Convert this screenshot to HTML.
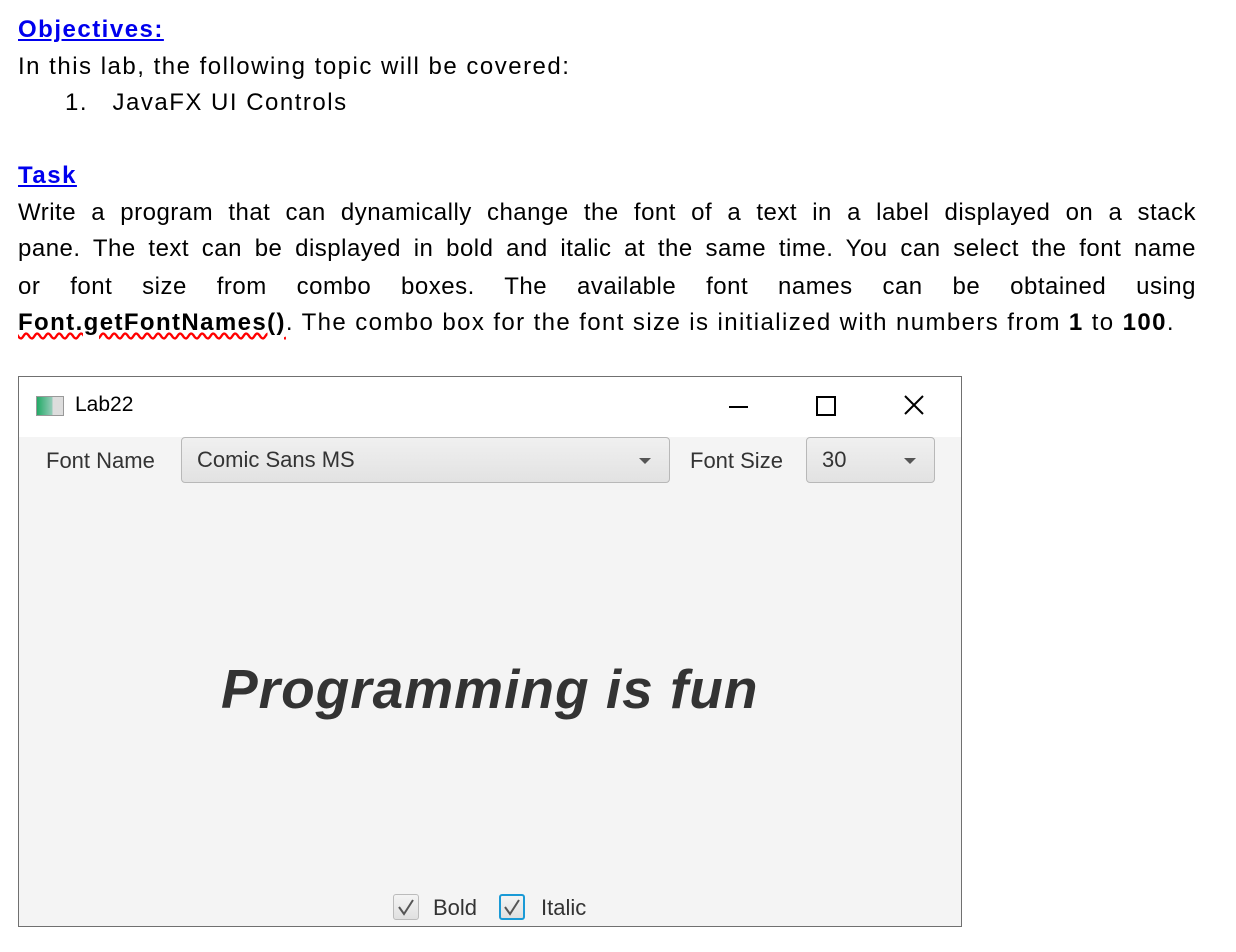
<!DOCTYPE html>
<html><head><style>
body{margin:0;width:1236px;height:952px;background:#fff;font-family:"Liberation Sans",sans-serif;position:relative;overflow:hidden;color:#000}
.t{position:absolute;left:18px;font-size:24px;white-space:nowrap;letter-spacing:1.5px}
a{color:#0000ee;font-weight:bold;text-decoration:underline}
.l{position:absolute;left:18px;width:1178px;font-size:24px;white-space:nowrap;text-align:justify;text-align-last:justify;letter-spacing:0.5px}
.win{position:absolute;left:18px;top:376px;width:942px;height:549px;border:1px solid #707070;background:#f4f4f4}
.tb{position:absolute;left:0;top:0;width:942px;height:60px;background:#fff}
.combo{position:absolute;height:46px;border:1px solid #b8b8b8;border-radius:4px;background:linear-gradient(#f0f0f0,#e2e2e2);box-sizing:border-box;font-size:22px;color:#333;line-height:44px;padding-left:15px}
.arr{position:absolute;right:18px;top:20px;width:0;height:0;border-left:6px solid transparent;border-right:6px solid transparent;border-top:6px solid #555}
.lab{position:absolute;font-size:22px;color:#333}
.cb{position:absolute;top:517px;width:26px;height:26px;border:1px solid #bbb;border-radius:3px;background:linear-gradient(#f4f4f4,#e0e0e0);box-sizing:border-box}
</style></head><body>
<div class="t" style="top:16px"><a>Objectives:</a></div>
<div class="t" style="top:53px">In this lab, the following topic will be covered:</div>
<div class="t" style="top:89px;left:65px">1.&nbsp;&nbsp;&nbsp;JavaFX UI Controls</div>
<div class="t" style="top:162px"><a>Task</a></div>
<div class="l" style="top:199px">Write a program that can dynamically change the font of a text in a label displayed on a stack</div>
<div class="l" style="top:235px">pane. The text can be displayed in bold and italic at the same time. You can select the font name</div>
<div class="l" style="top:273px">or font size from combo boxes. The available font names can be obtained using</div>
<div class="t" style="top:309px;letter-spacing:1.4px"><b style="text-decoration:underline wavy red">Font.getFontNames()</b>. The combo box for the font size is initialized with numbers from <b>1</b> to <b>100</b>.</div>
<div class="win">
<div class="tb">
<div style="position:absolute;left:17px;top:19px;width:26px;height:18px;border:1px solid #999;background:linear-gradient(90deg,#2a6 0,#9cb 60%,#ddd 60%)"></div>
<div class="lab" style="left:56px;top:16px;color:#000;font-size:21px">Lab22</div>
<div style="position:absolute;left:710px;top:29px;width:19px;height:2px;background:#000"></div>
<div style="position:absolute;left:797px;top:19px;width:16px;height:16px;border:2px solid #000"></div>
<svg style="position:absolute;left:884px;top:17px" width="22" height="22"><path d="M2 2L20 20M20 2L2 20" stroke="#000" stroke-width="2"/></svg>
</div>
<div class="lab" style="left:27px;top:71px">Font Name</div>
<div class="combo" style="left:162px;top:60px;width:489px">Comic Sans MS<div class="arr"></div></div>
<div class="lab" style="left:671px;top:71px">Font Size</div>
<div class="combo" style="left:787px;top:60px;width:129px">30<div class="arr"></div></div>
<div style="position:absolute;left:202px;top:280px;font-size:55px;font-weight:bold;font-style:italic;color:#333;letter-spacing:1px">Programming is fun</div>
<div class="cb" style="left:374px"><svg width="24" height="24"><path d="M5 12l5 7 9-14" stroke="#555" stroke-width="2" fill="none"/></svg></div>
<div class="lab" style="left:414px;top:518px">Bold</div>
<div class="cb" style="left:480px;border:2px solid #1a9ad6"><svg width="24" height="24"><path d="M4 11l5 7 9-14" stroke="#555" stroke-width="2" fill="none"/></svg></div>
<div class="lab" style="left:522px;top:518px">Italic</div>
</div>
</body></html>
